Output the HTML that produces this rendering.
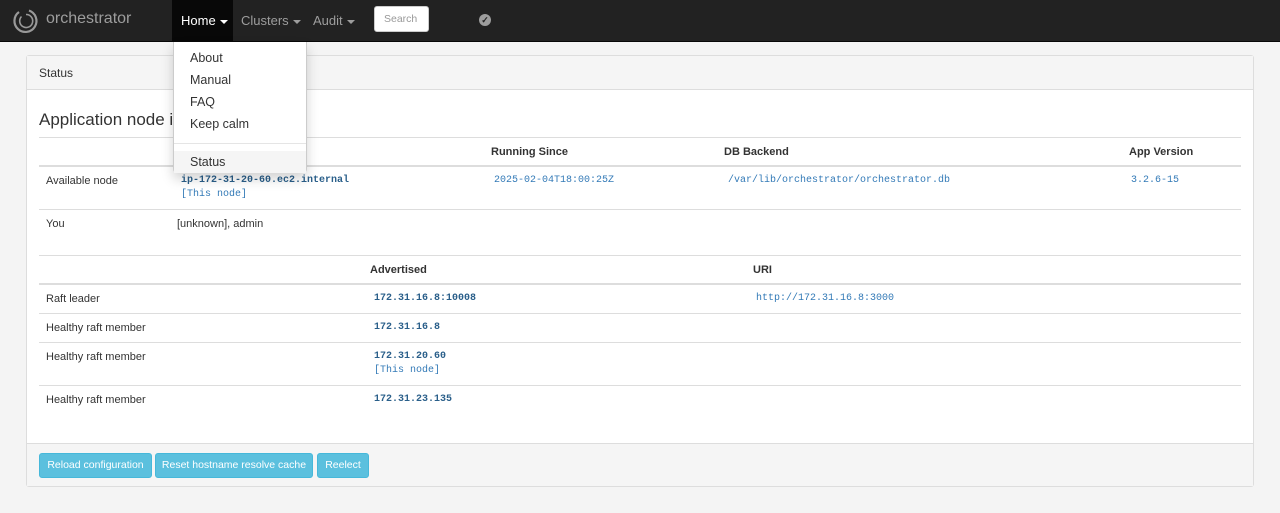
<!DOCTYPE html>
<html><head><style>
*{box-sizing:border-box;margin:0;padding:0}
body{width:1280px;height:513px;background:#f4f4f4;font-family:"Liberation Sans",sans-serif;font-size:11px;color:#333;position:relative;overflow:hidden}
.a{position:absolute;white-space:nowrap}
.nav{position:absolute;left:0;top:0;width:1280px;height:42px;background:#222;border-bottom:1px solid #080808}
.m{font-family:"Liberation Mono",monospace;font-size:10px;color:#337ab7}
.b{font-weight:bold;color:#2a5f8a}
.th{font-weight:bold;font-size:11px}
.ln{position:absolute;left:39px;width:1202px;height:1px;background:#ddd}
.btn{position:absolute;top:453px;height:25px;background:#5bc0de;border:1px solid #46b8da;border-radius:3px;color:#fff;font-size:10.5px;line-height:23px;text-align:center}
.caret{display:inline-block;border-top:4px solid;border-left:4px solid transparent;border-right:4px solid transparent;vertical-align:middle;margin-left:4px}
</style></head><body>
<div class="nav">
<svg class="a" style="left:12px;top:7px" width="28" height="28" viewBox="0 0 28 28"><path d="M17 3.5A11 11 0 1 1 7 5" fill="none" stroke="#999" stroke-width="2.2"/><path d="M14 7.5A6.5 6.5 0 1 1 9.5 9.5" fill="none" stroke="#999" stroke-width="1.6"/></svg>
<div class="a" style="left:46px;top:10px;font-size:16px;color:#9d9d9d">orchestrator</div>
<div class="a" style="left:172px;top:0;width:61px;height:42px;background:#080808"></div>
<div class="a" style="left:181px;top:13px;font-size:13px;color:#fff">Home<span class="caret"></span></div>
<div class="a" style="left:241px;top:13px;font-size:13px;color:#9d9d9d">Clusters<span class="caret"></span></div>
<div class="a" style="left:313px;top:13px;font-size:13px;color:#9d9d9d">Audit<span class="caret"></span></div>
<div class="a" style="left:374px;top:6px;width:55px;height:26px;background:#fff;border:1px solid #ccc;border-radius:3px;font-size:10.5px;color:#999;padding:6px 0 0 9px">Search</div>
<div class="a" style="left:479px;top:14px;width:12px;height:12px;border-radius:50%;background:#9d9d9d;color:#222;font-size:9px;line-height:12px;text-align:center;font-weight:bold">✓</div>
</div>

<div class="a" style="left:26px;top:55px;width:1228px;height:432px;background:#fff;border:1px solid #ddd;border-radius:3px"></div>
<div class="a" style="left:27px;top:56px;width:1226px;height:34px;background:#f5f5f5;border-bottom:1px solid #ddd"></div>
<div class="a" style="left:39px;top:66px;font-size:12px">Status</div>
<div class="a" style="left:27px;top:443px;width:1226px;height:43px;background:#f5f5f5;border-top:1px solid #ddd"></div>

<div class="a" style="left:39px;top:110px;font-size:17px">Application node is</div>
<div class="ln" style="top:137px"></div>
<div class="ln" style="top:165px;height:2px"></div>
<div class="ln" style="top:209px"></div>
<div class="a th" style="left:491px;top:146px">Running Since</div>
<div class="a th" style="left:724px;top:146px">DB Backend</div>
<div class="a th" style="left:1129px;top:146px">App Version</div>
<div class="a" style="left:46px;top:175px">Available node</div>
<div class="a m b" style="left:181px;top:175px">ip-172-31-20-60.ec2.internal</div>
<div class="a m" style="left:181px;top:189px">[This node]</div>
<div class="a m" style="left:494px;top:175px">2025-02-04T18:00:25Z</div>
<div class="a m" style="left:728px;top:175px">/var/lib/orchestrator/orchestrator.db</div>
<div class="a m" style="left:1131px;top:175px">3.2.6-15</div>
<div class="a" style="left:46px;top:218px">You</div>
<div class="a" style="left:177px;top:218px">[unknown], admin</div>

<div class="ln" style="top:255px"></div>
<div class="ln" style="top:283px;height:2px"></div>
<div class="ln" style="top:313px"></div>
<div class="ln" style="top:342px"></div>
<div class="ln" style="top:385px"></div>
<div class="a th" style="left:370px;top:264px">Advertised</div>
<div class="a th" style="left:753px;top:264px">URI</div>
<div class="a" style="left:46px;top:293px">Raft leader</div>
<div class="a m b" style="left:374px;top:293px">172.31.16.8:10008</div>
<div class="a m" style="left:756px;top:293px">http://172.31.16.8:3000</div>
<div class="a" style="left:46px;top:322px">Healthy raft member</div>
<div class="a m b" style="left:374px;top:322px">172.31.16.8</div>
<div class="a" style="left:46px;top:351px">Healthy raft member</div>
<div class="a m b" style="left:374px;top:351px">172.31.20.60</div>
<div class="a m" style="left:374px;top:365px">[This node]</div>
<div class="a" style="left:46px;top:394px">Healthy raft member</div>
<div class="a m b" style="left:374px;top:394px">172.31.23.135</div>

<div class="btn" style="left:39px;width:113px">Reload configuration</div>
<div class="btn" style="left:155px;width:158px">Reset hostname resolve cache</div>
<div class="btn" style="left:317px;width:52px">Reelect</div>

<div class="a" style="left:173px;top:42px;width:134px;height:131px;background:#fff;border:1px solid #ccc;border-top:none;border-radius:0 0 4px 4px;box-shadow:0 6px 12px rgba(0,0,0,.175)"></div>
<div class="a" style="left:190px;top:51px;font-size:12.5px">About</div>
<div class="a" style="left:190px;top:73px;font-size:12.5px">Manual</div>
<div class="a" style="left:190px;top:95px;font-size:12.5px">FAQ</div>
<div class="a" style="left:190px;top:117px;font-size:12.5px">Keep calm</div>
<div class="a" style="left:174px;top:143px;width:132px;height:1px;background:#e5e5e5"></div>
<div class="a" style="left:174px;top:151px;width:132px;height:22px;background:#f5f5f5"></div>
<div class="a" style="left:190px;top:155px;font-size:12.5px">Status</div>
</body></html>
